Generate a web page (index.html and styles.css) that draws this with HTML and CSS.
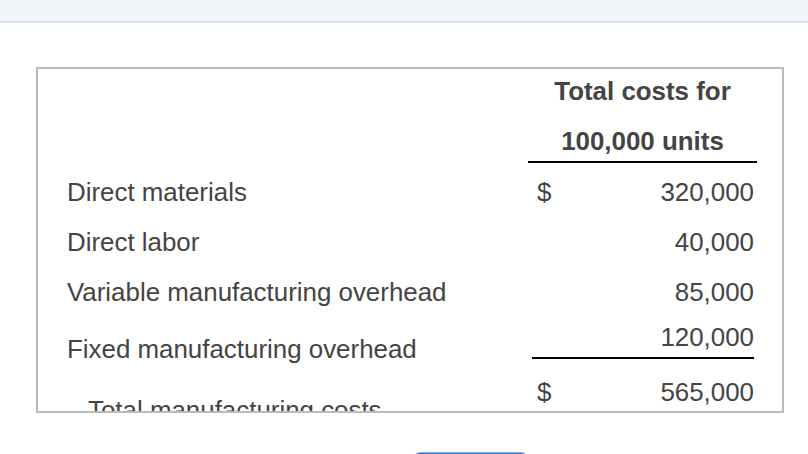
FILE: index.html
```html
<!DOCTYPE html>
<html>
<head>
<meta charset="utf-8">
<link rel="stylesheet" href="styles.css">
</head>
<body>
<div class="topbar"></div>
<div class="box">
  <div class="sheet">
    <div class="labels">
      <div class="lab">Direct materials</div>
      <div class="lab">Direct labor</div>
      <div class="lab">Variable manufacturing overhead</div>
      <div class="lab lab-fixed">Fixed manufacturing overhead</div>
      <div class="lab lab-total">Total manufacturing costs</div>
    </div>
    <div class="values">
      <div class="head">
        <div class="head-line">Total costs for</div>
        <div class="head-line">100,000 units</div>
      </div>
      <div class="vals">
        <div class="val"><span class="cur">$</span><span>320,000</span></div>
        <div class="val"><span></span><span>40,000</span></div>
        <div class="val"><span></span><span>85,000</span></div>
        <div class="val val-fixed"><span></span><span>120,000</span></div>
        <div class="val val-total"><span class="cur">$</span><span>565,000</span></div>
      </div>
    </div>
  </div>
</div>
<div class="btn-row"><div class="btn"></div></div>
</body>
</html>
```

FILE: styles.css
```css
html, body {
  margin: 0;
  padding: 0;
  background: #ffffff;
}
body {
  font-family: "Liberation Sans", Arial, sans-serif;
  color: #444444;
  overflow: hidden;
  height: 454px;
}
.topbar {
  height: 21px;
  background: #f2f6fb;
  border-bottom: 2px solid #d3e2f4;
}
.box {
  box-sizing: border-box;
  margin: 44px 0 0 36px;
  width: 748px;
  height: 346px;
  border: 2px solid #bababa;
  overflow: hidden;
}
.sheet {
  display: grid;
  grid-template-columns: 1fr 229px;
  padding-right: 25px;
  font-size: 25.9px;
}
.labels {
  padding-top: 98px;
  padding-left: 29px;
}
.lab {
  line-height: 50px;
  white-space: nowrap;
}
.lab-fixed {
  line-height: 64px;
}
.lab-total {
  line-height: 58px;
  padding-left: 21px;
}
.head {
  padding-top: 2px;
  display: flex;
  flex-direction: column;
  gap: 10px;
  border-bottom: 2px solid #000;
  font-weight: bold;
  text-align: center;
}
.head-line {
  line-height: 40px;
}
.vals {
  padding-top: 4px;
}
.val {
  display: flex;
  justify-content: space-between;
  line-height: 50px;
  padding: 0 3px 0 9px;
}
.val-fixed {
  line-height: 40px;
  margin: 0 3px 0 4px;
  padding: 0 0 0 5px;
  border-bottom: 2px solid #000;
}
.val-total {
  line-height: 66px;
}
.btn-row {
  display: flex;
  padding-left: 413px;
  margin-top: 39px;
}
.btn {
  width: 115px;
  height: 40px;
  box-sizing: border-box;
  background: #3c7bd0;
  border: 1px solid #80aee6;
  border-radius: 7px;
}
```
